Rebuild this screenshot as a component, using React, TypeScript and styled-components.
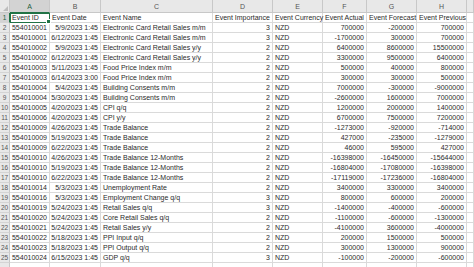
import styled, { createGlobalStyle } from "styled-components";

const GlobalStyle = createGlobalStyle`
  html, body {
    margin: 0;
    padding: 0;
    background: #ffffff;
    overflow: hidden;
  }
`;

const COLS = ["A", "B", "C", "D", "E", "F", "G", "H", ""];

// true = right aligned (numbers / dates)
const NUMERIC = [true, true, false, true, false, true, true, true, false];

const ROWS: string[][] = [
  ["Event ID", "Event Date", "Event Name", "Event Importance", "Event Currency", "Event Actual", "Event Forecast", "Event Previous"],
  ["554010001", "5/9/2023 1:45", "Electronic Card Retail Sales m/m", "3", "NZD", "700000", "-200000", "700000"],
  ["554010001", "6/12/2023 1:45", "Electronic Card Retail Sales m/m", "3", "NZD", "-1700000", "300000", "700000"],
  ["554010002", "5/9/2023 1:45", "Electronic Card Retail Sales y/y", "2", "NZD", "6400000", "8600000", "15500000"],
  ["554010002", "6/12/2023 1:45", "Electronic Card Retail Sales y/y", "2", "NZD", "3300000", "9500000", "6400000"],
  ["554010003", "5/11/2023 1:45", "Food Price Index m/m", "2", "NZD", "500000", "400000", "800000"],
  ["554010003", "6/14/2023 3:00", "Food Price Index m/m", "2", "NZD", "300000", "300000", "500000"],
  ["554010004", "5/4/2023 1:45", "Building Consents m/m", "2", "NZD", "7000000", "-300000", "-9000000"],
  ["554010004", "5/30/2023 1:45", "Building Consents m/m", "2", "NZD", "-2600000", "1600000", "7000000"],
  ["554010005", "4/20/2023 1:45", "CPI q/q", "2", "NZD", "1200000", "2000000", "1400000"],
  ["554010006", "4/20/2023 1:45", "CPI y/y", "2", "NZD", "6700000", "7500000", "7200000"],
  ["554010009", "4/26/2023 1:45", "Trade Balance", "2", "NZD", "-1273000", "-920000", "-714000"],
  ["554010009", "5/19/2023 1:45", "Trade Balance", "2", "NZD", "427000", "-235000", "-1279000"],
  ["554010009", "6/22/2023 1:45", "Trade Balance", "2", "NZD", "46000", "595000", "427000"],
  ["554010010", "4/26/2023 1:45", "Trade Balance 12-Months", "2", "NZD", "-16398000", "-16450000", "-15644000"],
  ["554010010", "5/19/2023 1:45", "Trade Balance 12-Months", "2", "NZD", "-16804000", "-17080000", "-16398000"],
  ["554010010", "6/22/2023 1:45", "Trade Balance 12-Months", "2", "NZD", "-17119000", "-17236000", "-16804000"],
  ["554010014", "5/3/2023 1:45", "Unemployment Rate", "2", "NZD", "3400000", "3300000", "3400000"],
  ["554010016", "5/3/2023 1:45", "Employment Change q/q", "3", "NZD", "800000", "600000", "200000"],
  ["554010019", "5/24/2023 1:45", "Retail Sales q/q", "3", "NZD", "-1400000", "-400000", "-600000"],
  ["554010020", "5/24/2023 1:45", "Core Retail Sales q/q", "2", "NZD", "-1100000", "-600000", "-1300000"],
  ["554010021", "5/24/2023 1:45", "Retail Sales y/y", "2", "NZD", "-4100000", "3600000", "-4000000"],
  ["554010022", "5/18/2023 1:45", "PPI Input q/q", "2", "NZD", "200000", "1500000", "500000"],
  ["554010023", "5/18/2023 1:45", "PPI Output q/q", "2", "NZD", "300000", "1300000", "900000"],
  ["554010024", "6/15/2023 1:45", "GDP q/q", "3", "NZD", "-100000", "-200000", "-600000"],
];

const Sheet = styled.div`
  display: grid;
  grid-template-columns: 10px 40px 51px 112px 60px 50px 44px 50px 50px 1fr;
  grid-template-rows: 13px;
  grid-auto-rows: 10px;
  width: 474px;
  height: 267px;
  overflow: hidden;
  font-family: "Liberation Sans", Arial, sans-serif;
  font-size: 7px;
  color: #2a2a2a;
`;

const Corner = styled.div`
  background: #e8e8e8;
  border-right: 1px solid #c8c8c8;
  border-bottom: 1px solid #c8c8c8;
  position: relative;
  &::after {
    content: "";
    position: absolute;
    right: 1px;
    bottom: 1px;
    border-left: 5px solid transparent;
    border-bottom: 5px solid #bdbdbd;
  }
`;

const ColHead = styled.div<{ $active?: boolean }>`
  display: flex;
  align-items: center;
  justify-content: center;
  background: ${(p) => (p.$active ? "#d3d3d3" : "#e8e8e8")};
  color: ${(p) => (p.$active ? "#1e5e3c" : "#555")};
  border-right: 1px solid #c8c8c8;
  border-bottom: ${(p) => (p.$active ? "1px solid #217346" : "1px solid #c8c8c8")};
  font-size: 7px;
`;

const RowHead = styled.div<{ $active?: boolean }>`
  display: flex;
  align-items: center;
  justify-content: center;
  background: ${(p) => (p.$active ? "#d3d3d3" : "#e8e8e8")};
  color: ${(p) => (p.$active ? "#1e5e3c" : "#555")};
  border-right: ${(p) => (p.$active ? "1px solid #217346" : "1px solid #c8c8c8")};
  border-bottom: 1px solid #d4d4d4;
  font-size: 6.5px;
`;

const Cell = styled.div<{ $num?: boolean; $selected?: boolean }>`
  position: relative;
  display: flex;
  align-items: center;
  justify-content: ${(p) => (p.$num ? "flex-end" : "flex-start")};
  padding: 0 2px;
  white-space: nowrap;
  overflow: visible;
  border-right: 1px solid #dadada;
  border-bottom: 1px solid #dadada;
  line-height: 1;
  box-sizing: border-box;
  ${(p) =>
    p.$selected &&
    `
    outline: 1px solid #217346;
    outline-offset: -1px;
    z-index: 1;
  `}
`;

const FillHandle = styled.span`
  position: absolute;
  right: -2px;
  bottom: -2px;
  width: 3px;
  height: 3px;
  background: #217346;
  border: 1px solid #fff;
`;

export default function App() {
  return (
    <>
      <GlobalStyle />
      <Sheet>
        <Corner />
        {COLS.map((c, i) => (
          <ColHead key={i} $active={i === 0}>
            {c}
          </ColHead>
        ))}
        {ROWS.map((row, r) => (
          <>
            <RowHead key={`h${r}`} $active={r === 0}>
              {r + 1}
            </RowHead>
            {[...row, ""].map((v, c) => (
              <Cell
                key={`${r}-${c}`}
                $num={r > 0 && NUMERIC[c]}
                $selected={r === 0 && c === 0}
              >
                {v}
                {r === 0 && c === 0 && <FillHandle />}
              </Cell>
            ))}
          </>
        ))}
        {/* partly visible empty row at the bottom edge */}
        <RowHead />
        {COLS.map((_, c) => (
          <Cell key={`tail-${c}`} />
        ))}
      </Sheet>
    </>
  );
}
